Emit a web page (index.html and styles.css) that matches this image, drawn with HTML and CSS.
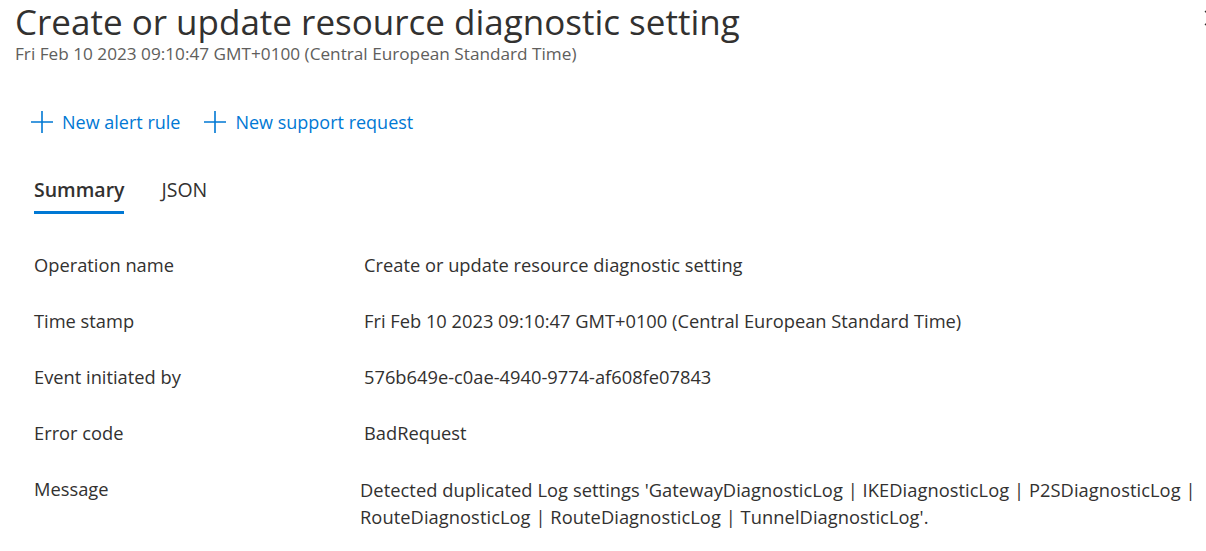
FILE: index.html
```html
<!DOCTYPE html>
<html>
<head>
<meta charset="utf-8">
<link rel="stylesheet" href="styles.css">
</head>
<body>
<div class="page">
  <header class="header">
    <h1 class="title">Create or update resource diagnostic setting</h1>
    <div class="subtitle">Fri Feb 10 2023 09:10:47 GMT+0100 (Central European Standard Time)</div>
    <button class="close" aria-label="Close">
      <svg width="16" height="16" viewBox="0 0 16 16"><path d="M1 1 L15 15 M15 1 L1 15" stroke="#323130" stroke-width="1.3" fill="none"/></svg>
    </button>
  </header>
  <div class="toolbar">
    <a class="cmd"><svg class="plus" width="22" height="22" viewBox="0 0 22 22"><path d="M11 0 V22 M0 11 H22" stroke="#0078d4" stroke-width="1.6" fill="none"/></svg><span>New alert rule</span></a>
    <a class="cmd"><svg class="plus" width="22" height="22" viewBox="0 0 22 22"><path d="M11 0 V22 M0 11 H22" stroke="#0078d4" stroke-width="1.6" fill="none"/></svg><span>New support request</span></a>
  </div>
  <div class="tabs">
    <div class="tab active">Summary</div>
    <div class="tab">JSON</div>
  </div>
  <div class="details">
    <div class="row"><div class="label">Operation name</div><div class="value">Create or update resource diagnostic setting</div></div>
    <div class="row"><div class="label">Time stamp</div><div class="value">Fri Feb 10 2023 09:10:47 GMT+0100 (Central European Standard Time)</div></div>
    <div class="row"><div class="label">Event initiated by</div><div class="value">576b649e-c0ae-4940-9774-af608fe07843</div></div>
    <div class="row"><div class="label">Error code</div><div class="value">BadRequest</div></div>
    <div class="row"><div class="label">Message</div><div class="value message">Detected duplicated Log settings 'GatewayDiagnosticLog | IKEDiagnosticLog | P2SDiagnosticLog | RouteDiagnosticLog | RouteDiagnosticLog | TunnelDiagnosticLog'.</div></div>
  </div>
</div>
</body>
</html>
```
FILE: styles.css
```css
html, body {
  margin: 0;
  padding: 0;
  background: #ffffff;
  overflow: hidden;
}
body {
  font-family: "Open Sans", "Noto Sans", sans-serif;
  color: #323130;
}
.page {
  width: 1206px;
  height: 551px;
  position: relative;
}
.header {
  padding: 0 0 0 15px;
  position: relative;
}
.title {
  margin: 0;
  font-size: 35px;
  font-weight: 400;
  line-height: 44px;
  color: #323130;
}
.subtitle {
  font-size: 17.2px;
  line-height: 20px;
  color: #605e5c;
}
.close {
  position: absolute;
  top: 10px;
  right: -14px;
  width: 16px;
  height: 16px;
  border: none;
  background: none;
  padding: 0;
}
.close svg {
  display: block;
}
.toolbar {
  display: flex;
  gap: 24px;
  padding: 43px 0 0 31px;
  height: 30px;
  align-items: center;
}
.cmd {
  display: flex;
  align-items: center;
  gap: 9px;
  color: #0078d4;
  font-size: 18px;
}
.tabs {
  display: flex;
  gap: 37px;
  padding: 40px 0 0 34px;
}
.tab {
  font-size: 19.5px;
  line-height: 26px;
  padding-bottom: 8px;
  color: #323130;
}
.tab.active {
  font-weight: 600;
  border-bottom: 3px solid #0078d4;
}
.details {
  padding: 38px 0 0 34px;
}
.row {
  display: flex;
  min-height: 56px;
}
.label {
  width: 330px;
  flex: none;
  font-size: 18.3px;
  line-height: 26px;
}
.value {
  font-size: 18.3px;
  line-height: 26px;
}
.message {
  margin-left: -4px;
  width: 845px;
  line-height: 27px;
  letter-spacing: 0.06px;
}
```
